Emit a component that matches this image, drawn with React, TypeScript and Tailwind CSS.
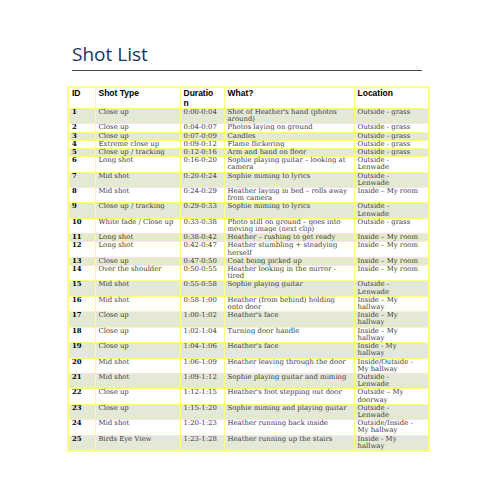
const rows: [string, string, string, string[], string[]][] = [
  ["1", "Close up", "0:00-0:04", ["Shot of Heather's hand (photos", "around)"], ["Outside - grass"]],
  ["2", "Close up", "0:04-0:07", ["Photos laying on ground"], ["Outside - grass"]],
  ["3", "Close up", "0:07-0:09", ["Candles"], ["Outside - grass"]],
  ["4", "Extreme close up", "0:09-0:12", ["Flame flickering"], ["Outside - grass"]],
  ["5", "Close up / tracking", "0:12-0:16", ["Arm and hand on floor"], ["Outside - grass"]],
  ["6", "Long shot", "0:16-0:20", ["Sophie playing guitar \u2013 looking at", "camera"], ["Outside -", "Lenwade"]],
  ["7", "Mid shot", "0:20-0:24", ["Sophie miming to lyrics"], ["Outside -", "Lenwade"]],
  ["8", "Mid shot", "0:24-0:29", ["Heather laying in bed \u2013 rolls away", "from camera"], ["Inside \u2013 My room"]],
  ["9", "Close up / tracking", "0:29-0:33", ["Sophie miming to lyrics"], ["Outside -", "Lenwade"]],
  ["10", "White fade / Close up", "0:33-0:38", ["Photo still on ground \u2013 goes into", "moving image (next clip)"], ["Outside - grass"]],
  ["11", "Long shot", "0:38-0:42", ["Heather \u2013 rushing to get ready"], ["Inside \u2013 My room"]],
  ["12", "Long shot", "0:42-0:47", ["Heather stumbling + steadying", "herself"], ["Inside \u2013 My room"]],
  ["13", "Close up", "0:47-0:50", ["Coat being picked up"], ["Inside \u2013 My room"]],
  ["14", "Over the shoulder", "0:50-0:55", ["Heather looking in the mirror -", "tired"], ["Inside \u2013 My room"]],
  ["15", "Mid shot", "0:55-0:58", ["Sophie playing guitar"], ["Outside -", "Lenwade"]],
  ["16", "Mid shot", "0:58-1:00", ["Heather (from behind) holding", "onto door"], ["Inside \u2013 My", "hallway"]],
  ["17", "Close up", "1:00-1:02", ["Heather's face"], ["Inside \u2013 My", "hallway"]],
  ["18", "Close up", "1:02-1:04", ["Turning door handle"], ["Inside \u2013 My", "hallway"]],
  ["19", "Close up", "1:04-1:06", ["Heather's face"], ["Inside - My", "hallway"]],
  ["20", "Mid shot", "1:06-1:09", ["Heather leaving through the door"], ["Inside/Outside -", "My hallway"]],
  ["21", "Mid shot", "1:09-1:12", ["Sophie playing guitar and miming"], ["Outside -", "Lenwade"]],
  ["22", "Close up", "1:12-1:15", ["Heather's foot stepping out door"], ["Outside \u2013 My", "doorway"]],
  ["23", "Close up", "1:15-1:20", ["Sophie miming and playing guitar"], ["Outside -", "Lenwade"]],
  ["24", "Mid shot", "1:20-1:23", ["Heather running back inside"], ["Outside/Inside -", "My hallway"]],
  ["25", "Birds Eye View", "1:23-1:28", ["Heather running up the stairs"], ["Inside - My", "hallway"]],
];

const serif = { fontFamily: "'DejaVu Serif', 'Liberation Serif', serif" };
const sans = { fontFamily: "'Open Sans', 'Liberation Sans', sans-serif" };
const headSans = { fontFamily: "'Liberation Sans', Arial, sans-serif" };

function Lines({ lines }: { lines: string[] }) {
  return (
    <>
      {lines.map((l, i) => (
        <div key={i} className="whitespace-nowrap">
          {l}
        </div>
      ))}
    </>
  );
}

export default function App() {
  return (
    <div className="w-[495px] h-[495px] bg-white overflow-hidden">
      <div className="pt-[44px] pl-[72px] pr-[73px]">
        <h1
          className="text-[19px] leading-[21px] text-[#17365d] pb-[5px] border-b-[1.5px] border-[#3b4656]"
          style={sans}
        >
          Shot List
        </h1>
      </div>
      <div className="pl-[67px] mt-[15px]">
        <table className="table-fixed border-collapse w-[361px] border-2 border-[#ffff80]">
          <colgroup>
            <col className="w-[27px]" />
            <col className="w-[85px]" />
            <col className="w-[44px]" />
            <col className="w-[130px]" />
            <col className="w-[75px]" />
          </colgroup>
          <thead>
            <tr className="text-[8.5px] leading-[9.5px] font-bold text-black align-top" style={headSans}>
              <th className="border border-[#ffff80] text-left px-[3px] pt-[1px] font-bold">ID</th>
              <th className="border border-[#ffff80] text-left px-[3px] pt-[1px] font-bold">Shot Type</th>
              <th className="border border-[#ffff80] text-left px-[3px] pt-[1px] font-bold">
                <div>Duratio</div>
                <div>n</div>
              </th>
              <th className="border border-[#ffff80] text-left px-[3px] pt-[1px] font-bold">What?</th>
              <th className="border border-[#ffff80] text-left px-[3px] pt-[1px] font-bold">Location</th>
            </tr>
          </thead>
          <tbody>
            {rows.map(([id, type, dur, what, loc], i) => (
              <tr
                key={id}
                className={`text-[6.9px] leading-[7.2px] text-[#3a3a36] align-top ${i % 2 === 0 ? "bg-[#e4e9d7]" : "bg-white"}`}
                style={serif}
              >
                <td className="border border-[#ffff80] px-[3px] font-bold text-black">{id}</td>
                <td className="border border-[#ffff80] px-[3px] whitespace-nowrap">{type}</td>
                <td className="border border-[#ffff80] px-[3px] whitespace-nowrap">{dur}</td>
                <td className="border border-[#ffff80] px-[3px]">
                  <Lines lines={what} />
                </td>
                <td className="border border-[#ffff80] px-[3px]">
                  <Lines lines={loc} />
                </td>
              </tr>
            ))}
          </tbody>
        </table>
      </div>
    </div>
  );
}
